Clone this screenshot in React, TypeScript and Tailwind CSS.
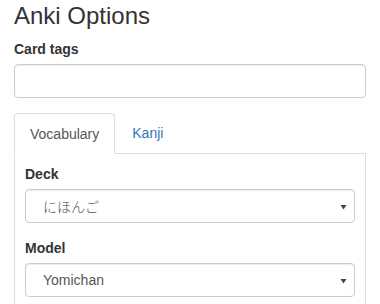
import React from "react";

function Caret() {
  return (
    <svg width="7" height="5" viewBox="0 0 7 5" className="absolute right-[7px] top-[15px]">
      <polygon points="0.5,0 6.5,0 3.5,4.5" fill="#444" />
    </svg>
  );
}

function Select({ value, jp }: { value: string; jp?: boolean }) {
  return (
    <div className="relative h-[34px] w-full rounded-[4px] border border-[#ccc] bg-white shadow-[inset_0_1px_1px_rgba(0,0,0,0.075)]">
      <div
        className={
          "pl-[17px] leading-[32px] text-[14px] text-[#555] " +
          (jp ? "[font-family:'Noto_Sans_CJK_JP',sans-serif] font-light" : "")
        }
      >
        {value}
      </div>
      <Caret />
    </div>
  );
}

export default function App() {
  return (
    <div className="w-[380px] h-[304px] overflow-hidden bg-white px-[14px] pt-[3px] text-[14px] leading-[20px] text-[#333] [font-family:'Liberation_Sans',Arial,sans-serif]">
      <h3 className="text-[24px] leading-[26.4px] font-normal mb-[10px]">Anki Options</h3>
      <div className="font-bold mb-[5px]">Card tags</div>
      <div className="h-[34px] w-full rounded-[4px] border border-[#ccc] bg-white shadow-[inset_0_1px_1px_rgba(0,0,0,0.075)]" />
      <div className="mt-[15px] flex border-b border-[#ddd]">
        <div className="-mb-px h-[41px] rounded-t-[4px] border border-[#ddd] border-b-white bg-white px-[15px] py-[10px] text-[#555]">
          Vocabulary
        </div>
        <div className="ml-[2px] px-[15px] py-[10px] text-[#337ab7]">Kanji</div>
      </div>
      <div className="border-x border-[#ddd] px-[10px] pt-[10px] pb-[10px]">
        <div className="font-bold mb-[5px]">Deck</div>
        <Select value="にほんご" jp />
        <div className="font-bold mb-[5px] mt-[15px]">Model</div>
        <Select value="Yomichan" />
      </div>
    </div>
  );
}
